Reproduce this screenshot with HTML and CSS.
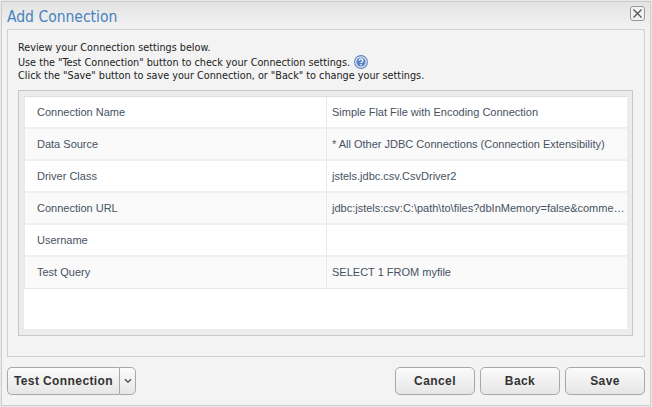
FILE: index.html
```html
<!DOCTYPE html>
<html lang="en">
<head>
<meta charset="utf-8">
<title>Add Connection</title>
<link rel="stylesheet" href="styles.css">
</head>
<body>
<div class="dialog">
  <header class="titlebar">
    <h1 class="title">Add Connection</h1>
    <button class="close" aria-label="Close">
      <svg width="11" height="11" viewBox="0 0 11 11"><path d="M1.500 1.500l8 8M9.500 1.500l-8 8" stroke="#555" stroke-width="1.300" fill="none"/></svg>
    </button>
  </header>
  <main class="panel">
    <div class="intro">
      <p>Review your Connection settings below.</p>
      <p>Use the "Test Connection" button to check your Connection settings.
        <svg class="help" width="14" height="14" viewBox="0 0 14 14"><circle cx="7" cy="7" r="6.4" fill="#dfe8f6" stroke="#5f86c4" stroke-width="1.100"/><circle cx="7" cy="7" r="4.600" fill="#5f86c4"/><path d="M5.300 5.600c0-2.200 3.500-2.200 3.500-.1 0 1.400-1.800 1.400-1.800 2.500" fill="none" stroke="#fff" stroke-width="1.200"/><circle cx="7" cy="9.800" r=".8" fill="#fff"/></svg>
      </p>
      <p>Click the "Save" button to save your Connection, or "Back" to change your settings.</p>
    </div>
    <div class="tablebox">
      <div class="rows">
        <div class="row"><div class="cell name">Connection Name</div><div class="cell value">Simple Flat File with Encoding Connection</div></div>
        <div class="row alt"><div class="cell name">Data Source</div><div class="cell value">* All Other JDBC Connections (Connection Extensibility)</div></div>
        <div class="row"><div class="cell name">Driver Class</div><div class="cell value">jstels.jdbc.csv.CsvDriver2</div></div>
        <div class="row alt"><div class="cell name">Connection URL</div><div class="cell value">jdbc:jstels:csv:C:\path\to\files?dbInMemory=false&amp;commentLine=--&amp;charset=UTF-8</div></div>
        <div class="row"><div class="cell name">Username</div><div class="cell value"></div></div>
        <div class="row alt"><div class="cell name">Test Query</div><div class="cell value">SELECT 1 FROM myfile</div></div>
      </div>
    </div>
  </main>
  <footer class="actions">
    <div class="split">
      <button class="btn test">Test Connection</button><button class="btn caret" aria-label="More"><svg width="8" height="6" viewBox="0 0 8 6"><path d="M1 1.200l3 3 3-3" fill="none" stroke="#444" stroke-width="1.300"/></svg></button>
    </div>
    <div class="right">
      <button class="btn wide">Cancel</button>
      <button class="btn wide">Back</button>
      <button class="btn wide">Save</button>
    </div>
  </footer>
</div>
</body>
</html>
```
FILE: styles.css
```css
* { box-sizing: border-box; }
html, body { margin: 0; padding: 0; }
body { width: 652px; height: 407px; overflow: hidden; background: #f2f2f2; font-family: "Liberation Sans", Arial, sans-serif; }
.dialog { width: 652px; height: 407px; display: flex; flex-direction: column; padding: 0 6px 0 7px; background: linear-gradient(#e2e2e2 0, #f3f3f3 28px); border: 1px solid #e9e9e9; box-shadow: inset 0 0 0 1px #cdcdcd; }
.titlebar { height: 28px; display: flex; justify-content: space-between; flex: none; margin-left: -1px; }
.title { margin: 6px 0 0; font: normal 15.5px/20px "DejaVu Sans Condensed", "DejaVu Sans", sans-serif; color: #4583c0; }
.close { width: 15px; height: 15px; padding: 0; margin: 5px 0 0 0; display: flex; align-items: center; justify-content: center; background: #f2f2f2; border: 1px solid #999; border-radius: 3px; }
.panel { height: 328px; margin-left: -1px; border: 1px solid #d0d0d0; padding: 11px 11px 20px 10px; flex: none; display: flex; flex-direction: column; }
.intro { height: 49px; font: 10.75px/13.5px "DejaVu Sans Condensed", "DejaVu Sans", sans-serif; color: #222; }
.intro p { margin: 0; }
.help { vertical-align: -3px; margin-left: 1px; }
.tablebox { height: 246px; border: 1px solid #c8c8c8; background: #ececec; padding: 5px; flex: none; }
.rows { height: 233px; background: #fff; border-top: 1px solid #ddd; }
.row { display: flex; height: 32px; border-bottom: 2px solid #efefef; border-left: 1px solid #e8e8e8; background: #fff; }
.row.alt { background: #fafafa; }
.row:last-child { border-bottom: 1px solid #e8e8e8; }
.cell { font-size: 11px; line-height: 30px; color: #47525f; white-space: nowrap; overflow: hidden; text-overflow: ellipsis; }
.name { width: 302px; flex: none; padding-left: 12px; border-right: 1px solid #e8e8e8; }
.value { flex: 1; min-width: 0; padding: 0 0 0 5px; }
.actions { flex: 1; display: flex; justify-content: space-between; align-items: flex-start; padding-top: 10px; margin-left: -1px; }
.split { display: flex; }
.btn { height: 28px; font: bold 12px "Liberation Sans", sans-serif; letter-spacing: .4px; color: #333; background: linear-gradient(#fbfbfb, #e6e6e6); border: 1px solid #a8a8a8; border-radius: 5px; padding: 0; }
.test { width: 112px; border-radius: 5px 0 0 5px; border-right: 0; }
.caret { width: 17px; border-radius: 0 5px 5px 0; display: flex; align-items: center; justify-content: center; }
.right { display: flex; gap: 5px; }
.wide { width: 80px; }
```
